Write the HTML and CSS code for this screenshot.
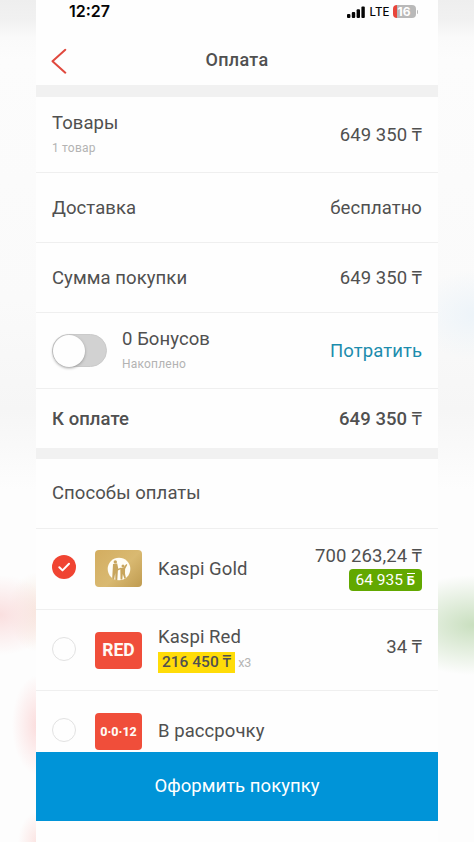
FILE: index.html
```html
<!DOCTYPE html>
<html lang="ru">
<head>
<meta charset="utf-8">
<title>Оплата</title>
<link rel="stylesheet" href="styles.css">
</head>
<body>
<main class="phone">
  <div class="status">
    <span class="time">12:27</span>
    <span class="indicators">
      <svg class="signal" width="18" height="12" viewBox="0 0 18 12"><rect x="0" y="8" width="3.4" height="4" rx="1"/><rect x="4.8" y="6" width="3.4" height="6" rx="1"/><rect x="9.6" y="3.2" width="3.4" height="8.8" rx="1"/><rect x="14.4" y="0.4" width="3.4" height="11.6" rx="1"/></svg>
      <span class="lte">LTE</span>
      <span class="battery">16</span>
      <span class="cap"></span>
    </span>
  </div>
  <header class="nav">
    <svg class="back" width="16" height="26" viewBox="0 0 16 26"><path d="M14.3 1.8 1.5 13.2 14.3 24.7"/></svg>
    <h1 class="title">Оплата</h1>
  </header>
  <div class="band"></div>
  <section class="row goods">
    <div class="grow"><div class="t">Товары</div><div class="sub">1 товар</div></div>
    <span class="t">649 350 ₸</span>
  </section>
  <section class="row delivery"><span class="t grow">Доставка</span><span class="t">бесплатно</span></section>
  <section class="row sum"><span class="t grow">Сумма покупки</span><span class="t">649 350 ₸</span></section>
  <section class="row bonus">
    <span class="switch"><span class="knob"></span></span>
    <div class="grow"><div class="t">0 Бонусов</div><div class="sub">Накоплено</div></div>
    <a class="t link">Потратить</a>
  </section>
  <section class="row total"><span class="t grow">К оплате</span><span class="t">649 350 <span class="regular">₸</span></span></section>
  <div class="band lower"></div>
  <section class="row methods"><h2 class="t">Способы оплаты</h2></section>
  <section class="row gold">
    <span class="radio checked"><svg width="24" height="24" viewBox="0 0 24 24"><path d="m7.3 12.2 3.2 3.2 6.5-6.6"/></svg></span>
    <span class="card gold-card">
      <svg width="24" height="24" viewBox="0 0 24 24"><circle cx="12" cy="12" r="11.3" fill="#fffdf5"/><g fill="#c8a55c"><circle cx="8.3" cy="4.9" r="1.7"/><path d="M6 7 10.2 6.6l1.1 5.1 2.9-1.2.2 1.3-3.5 1.8-.6 9.3H8.4l-.2-7-1 6.3-2-.7z"/><circle cx="16" cy="9" r="1.5"/><path d="m13.3 11.2 3.2-.8 2.8-3.4 1 .7-2.2 4.3-.1 4.4.9 4.6-1.5.8-1.6-4.8-.5 5.6h-1.8z"/></g></svg>
    </span>
    <span class="t grow">Kaspi Gold</span>
    <div class="right"><span class="t">700 263,24 ₸</span><span class="tag">64 935 <span class="bonus-sign">Б</span></span></div>
  </section>
  <section class="row red">
    <span class="radio"></span><span class="card red-card">RED</span>
    <div class="grow"><div class="t">Kaspi Red</div><div class="part"><span class="yellow">216 450 ₸</span><span class="times">x3</span></div></div>
    <span class="t thirty">34 ₸</span>
  </section>
  <section class="row installment">
    <span class="radio"></span><span class="card red-card small">0·0·12</span>
    <span class="t grow">В рассрочку</span>
  </section>
  <button class="pay">Оформить покупку</button>
</main>
</body>
</html>
```
FILE: styles.css
```css
* { box-sizing: border-box; }
body {
  margin: 0;
  height: 842px;
  overflow: hidden;
  background:
    radial-gradient(ellipse 90px 50px at 474px 625px, #c9dfbf, transparent),
    radial-gradient(ellipse 60px 45px at 474px 315px, #edf4f9, transparent),
    radial-gradient(ellipse 26px 50px at 38px 725px, #fbdcdc, transparent),
    radial-gradient(ellipse 20px 30px at 38px 842px, #fbe3e1, transparent),
    radial-gradient(ellipse 55px 40px at 0 615px, #fadfdf, transparent),
    radial-gradient(ellipse 30px 40px at 38px 612px, #f7e9de, transparent),
    linear-gradient(#eee 0, #f1f1f1 20px, #fafafa 38px, #fcfcfc 60px, #fafafa 300px, #f6f6f6 410px, #fdfdfd 490px, #fdfdfd 100%);
  font-family: Roboto, "Noto Sans", sans-serif;
  color: #505050;
}
.phone { width: 402px; height: 842px; margin-left: 36px; background: #fefefe; display: flex; flex-direction: column; }
.status { height: 24px; flex: none; display: flex; justify-content: space-between; padding: 0 20px 0 33px; color: #050505; font-family: Inter, sans-serif; }
.time { font-size: 16px; line-height: 23px; font-weight: 600; }
.indicators { display: flex; align-items: center; height: 23px; }
.signal { margin-right: 5px; fill: #050505; }
.lte { font-size: 11.5px; width: 23px; font-weight: 500; }
.battery { width: 23px; height: 13px; border-radius: 4px; background: linear-gradient(90deg, #e8453b 4px, #b9b9b9 4px); color: #fff; font-size: 12px; line-height: 13px; font-weight: 700; text-align: center; }
.cap { width: 1.5px; height: 4px; margin-left: 1px; background: #bbb; border-radius: 0 2px 2px 0; }
.nav { height: 61px; flex: none; display: grid; grid-template-columns: 50px 1fr 50px; align-items: center; padding-top: 10px; }
.back { margin: 2px 0 0 15px; fill: none; stroke: #e0493e; stroke-width: 2; stroke-linecap: round; stroke-linejoin: round; }
.title { margin: 0; text-align: center; font-size: 18px; line-height: 24px; font-weight: 500; letter-spacing: .3px; }
.band { height: 12px; flex: none; background: #f1f1f1; }
.lower { height: 11px; }
.row { flex: none; display: flex; align-items: center; padding: 0 16px; border-bottom: 1px solid #efefef; }
.grow { flex: 1; }
.t { margin: 0; font-size: 18.5px; line-height: 24px; font-weight: 400; letter-spacing: .07px; white-space: nowrap; }
.sub { font-size: 12px; line-height: 16px; letter-spacing: .2px; color: #b3b3b3; margin-top: 5px; }
.goods { height: 76px; }
.goods .grow, .bonus .grow { padding-bottom: 2px; }
.delivery { height: 70px; }
.sum { height: 70px; }
.bonus { height: 76px; }
.total { height: 59px; border: 0; }
.total .t { font-weight: 500; }
.total .regular { font-weight: 400; }
.switch { width: 55px; height: 33px; margin-right: 15px; border-radius: 17px; background: #d2d2d2; border: 1px solid #cacaca; display: flex; }
.knob { width: 32px; height: 32px; margin-top: -.5px; border-radius: 50%; background: #fefefe; box-shadow: 0 1px 3px #999; }
.link { color: #1c8cad; }
.methods { height: 70px; padding-bottom: 2px; }
.gold { height: 81px; padding-bottom: 1px; }
.red { height: 81px; }
.installment { height: 61px; border: 0; padding-top: 19px; }
.radio { width: 24px; height: 24px; margin: 0 19px 3px 0; border: 1.5px solid #e2e2e2; border-radius: 50%; flex: none; }
.checked { background: #f04432; border: 0; }
.checked svg { display: block; fill: none; stroke: #fff; stroke-width: 2; stroke-linecap: round; stroke-linejoin: round; }
.card { width: 47px; height: 37px; margin-right: 16px; border-radius: 4px; display: flex; align-items: center; justify-content: center; flex: none; }
.gold-card { background: linear-gradient(135deg, #d3ad60, #d9b971 55%, #bf9b50); }
.red-card { background: #f04e3a; color: #fffaf4; font-size: 17.5px; font-weight: 700; }
.small { font-size: 12.5px; font-weight: 800; }
.right { display: flex; flex-direction: column; align-items: flex-end; padding-bottom: 2px; }
.tag { height: 22px; margin-top: 1px; padding: 0 7px; background: #62a800; border-radius: 4px; color: #fff; font-size: 15.5px; line-height: 22px; }
.bonus-sign { display: inline-block; height: 13px; line-height: 14px; font-size: 13px; font-weight: 700; border-top: 1.5px solid #fff; vertical-align: 0; }
.red .grow { padding-bottom: 3px; }
.part { display: flex; align-items: center; margin-top: 3px; }
.yellow { height: 21px; padding: 0 4px; background: #ffdc08; font-size: 15.5px; line-height: 21px; font-weight: 500; white-space: nowrap; }
.times { margin-left: 3px; font-size: 12.5px; color: #b5b5b5; }
.thirty { padding-bottom: 6px; }
.pay { height: 69px; flex: none; margin: 0; padding: 0 0 1px; border: 0; background: #0094d8; color: #fff; font: 400 18.5px/24px Roboto, sans-serif; letter-spacing: .05px; }
```
